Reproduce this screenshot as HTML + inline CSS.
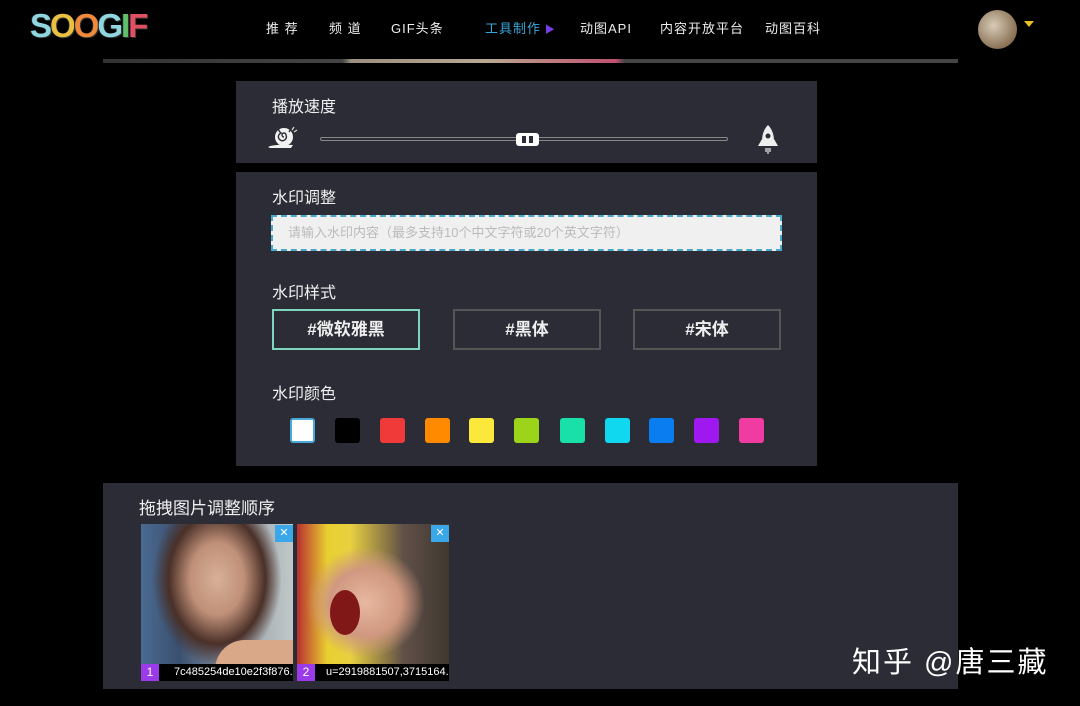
<!DOCTYPE html>
<html><head><meta charset="utf-8"><style>
*{margin:0;padding:0;box-sizing:border-box}
body{width:1080px;height:706px;background:#000;position:relative;overflow:hidden;font-family:"Liberation Sans","Noto Sans CJK SC",sans-serif;color:#fff}
.a{position:absolute}
.nav{top:18px;font-size:13px;color:#eee;letter-spacing:1px}
.panel{background:#2b2c35}
.h{font-size:16px;color:#f0f0f0}
.fb{border:2px solid #555;height:41px;width:148px;font-size:17px;font-weight:bold;text-align:center;line-height:37px;color:#eee}
.sw{width:25px;height:25px;border-radius:3px;top:418px}
</style></head><body>
<div class="a" style="left:30px;top:7px;font-size:33px;font-weight:900;letter-spacing:-2px;font-family:'Liberation Sans',sans-serif;text-shadow:1px 1px 0 #333,-1px 0 0 #222">
<span style="color:#8fd6e0">S</span><span style="color:#e9c040">O</span><span style="color:#f08a3a">O</span><span style="color:#8fd6e0">G</span><span style="color:#5fc26a">I</span><span style="color:#e05060">F</span></div>
<div class="a nav" style="left:266px">推 荐</div>
<div class="a nav" style="left:329px">频 道</div>
<div class="a nav" style="left:391px">GIF头条</div>
<div class="a nav" style="left:485px;color:#3aa6d8">工具制作<span style="color:#7a3ee8;font-size:10px"> ▶</span></div>
<div class="a nav" style="left:580px">动图API</div>
<div class="a nav" style="left:660px">内容开放平台</div>
<div class="a nav" style="left:765px">动图百科</div>
<div class="a" style="left:978px;top:10px;width:39px;height:39px;border-radius:50%;background:radial-gradient(circle at 40% 40%,#d8cbb8,#8a7255 70%,#5a4530)"></div>
<div class="a" style="left:1024px;top:21px;width:0;height:0;border-left:5px solid transparent;border-right:5px solid transparent;border-top:6px solid #e8c020"></div>
<div class="a" style="left:103px;top:59px;width:855px;height:4px;background:linear-gradient(90deg,#333 0,#444 28%,#9a9080 29%,#b8a890 45%,#c05070 60%,#444 61%,#444 100%)"></div>

<div class="a panel" style="left:236px;top:81px;width:581px;height:82px"></div>
<div class="a h" style="left:272px;top:93px">播放速度</div>
<svg class="a" style="left:267px;top:126px" width="32" height="24" viewBox="0 0 32 24"><circle cx="17" cy="11" r="9" fill="#f2f2f2"/><path d="M17 11 a2 2 0 1 1 2 -2 a4 4 0 1 1 -5 -2 a6 6 0 1 1 8 -1" fill="none" stroke="#2b2c35" stroke-width="1.4"/><path d="M1 21 Q6 18 26 19 L24 22 L3 22Z" fill="#f2f2f2"/><path d="M25 4 L27 1 M27 6 L30 4" stroke="#ddd" stroke-width="1.2"/></svg>
<div class="a" style="left:320px;top:137px;width:408px;height:4px;border:1px solid #888;border-radius:2px;background:#2b2c35"></div>
<div class="a" style="left:516px;top:133px;width:23px;height:13px;background:#fff;border-radius:3px"></div>
<div class="a" style="left:522px;top:136px;width:4px;height:7px;background:#2b2c35"></div>
<div class="a" style="left:529px;top:136px;width:4px;height:7px;background:#2b2c35"></div>
<svg class="a" style="left:756px;top:124px" width="24" height="30" viewBox="0 0 24 30"><path d="M12 1 Q18 7 18 17 L18 22 L6 22 L6 17 Q6 7 12 1Z" fill="#eee"/><path d="M6 15 L2 22 L6 22Z M18 15 L22 22 L18 22Z" fill="#eee"/><circle cx="12" cy="12" r="2.5" fill="#2b2c35"/><path d="M10 24 V28 M12 24 V30 M14 24 V28" stroke="#eee" stroke-width="1.2"/></svg>

<div class="a panel" style="left:236px;top:172px;width:581px;height:294px"></div>
<div class="a h" style="left:272px;top:184px">水印调整</div>
<div class="a" style="left:271px;top:215px;width:511px;height:36px;background:#f0f0f0;border:2px dashed #4aa8c8;font-size:13px;color:#bbb;line-height:32px;padding-left:15px">请输入水印内容（最多支持10个中文字符或20个英文字符）</div>
<div class="a h" style="left:272px;top:279px">水印样式</div>
<div class="a fb" style="left:272px;top:309px;border-color:#7fd6c0">#微软雅黑</div>
<div class="a fb" style="left:453px;top:309px">#黑体</div>
<div class="a fb" style="left:633px;top:309px">#宋体</div>
<div class="a h" style="left:272px;top:380px">水印颜色</div>
<div class="a sw" style="left:290px;background:#fff;border:2px solid #4aa8d8"></div>
<div class="a sw" style="left:335px;background:#000"></div>
<div class="a sw" style="left:380px;background:#f03a3a"></div>
<div class="a sw" style="left:425px;background:#ff8a00"></div>
<div class="a sw" style="left:469px;background:#fbe83a"></div>
<div class="a sw" style="left:514px;background:#9cd41a"></div>
<div class="a sw" style="left:560px;background:#18e0a8"></div>
<div class="a sw" style="left:605px;background:#10d8ee"></div>
<div class="a sw" style="left:649px;background:#0a7ef0"></div>
<div class="a sw" style="left:694px;background:#a018f0"></div>
<div class="a sw" style="left:739px;background:#f03ca0"></div>

<div class="a panel" style="left:103px;top:483px;width:855px;height:206px"></div>
<div class="a" style="left:139px;top:494px;font-size:17px;color:#f0f0f0">拖拽图片调整顺序</div>
<div class="a" style="left:141px;top:524px;width:152px;height:157px;background:radial-gradient(ellipse at 50% 35%,#d8b098 0,#c09078 25%,#4a3028 45%,transparent 60%),linear-gradient(90deg,#4a6a90 0,#3a5070 25%,#a0a8b0 70%,#c0c8c8 100%)"></div>
<div class="a" style="left:215px;top:640px;width:78px;height:30px;background:#d8a888;border-radius:30px 0 0 0"></div>
<div class="a" style="left:297px;top:524px;width:152px;height:157px;background:radial-gradient(ellipse at 45% 50%,#e8b8a0 0,#d09880 30%,transparent 50%),linear-gradient(90deg,#b83030 0,#e8d030 20%,#e8d040 35%,#605048 70%,#403830 100%)"></div>
<div class="a" style="left:330px;top:590px;width:30px;height:45px;border-radius:50%;background:#801818"></div>
<div class="a" style="left:275px;top:525px;width:18px;height:17px;background:#3aa8e8;font-size:11px;text-align:center;line-height:17px">✕</div>
<div class="a" style="left:431px;top:525px;width:18px;height:17px;background:#3aa8e8;font-size:11px;text-align:center;line-height:17px">✕</div>
<div class="a" style="left:141px;top:664px;width:152px;height:17px;background:#000;font-size:11px;line-height:17px;padding-left:33px;white-space:nowrap;overflow:hidden">7c485254de10e2f3f876...</div>
<div class="a" style="left:141px;top:664px;width:18px;height:17px;background:#9a3ae8;font-size:12px;text-align:center;line-height:17px">1</div>
<div class="a" style="left:297px;top:664px;width:152px;height:17px;background:#000;font-size:11px;line-height:17px;padding-left:29px;white-space:nowrap;overflow:hidden">u=2919881507,3715164...</div>
<div class="a" style="left:297px;top:664px;width:18px;height:17px;background:#9a3ae8;font-size:12px;text-align:center;line-height:17px">2</div>

<div class="a" style="left:852px;top:639px;font-size:29px;color:#fff;white-space:nowrap;letter-spacing:2px">知乎 @唐三藏</div>
</body></html>
